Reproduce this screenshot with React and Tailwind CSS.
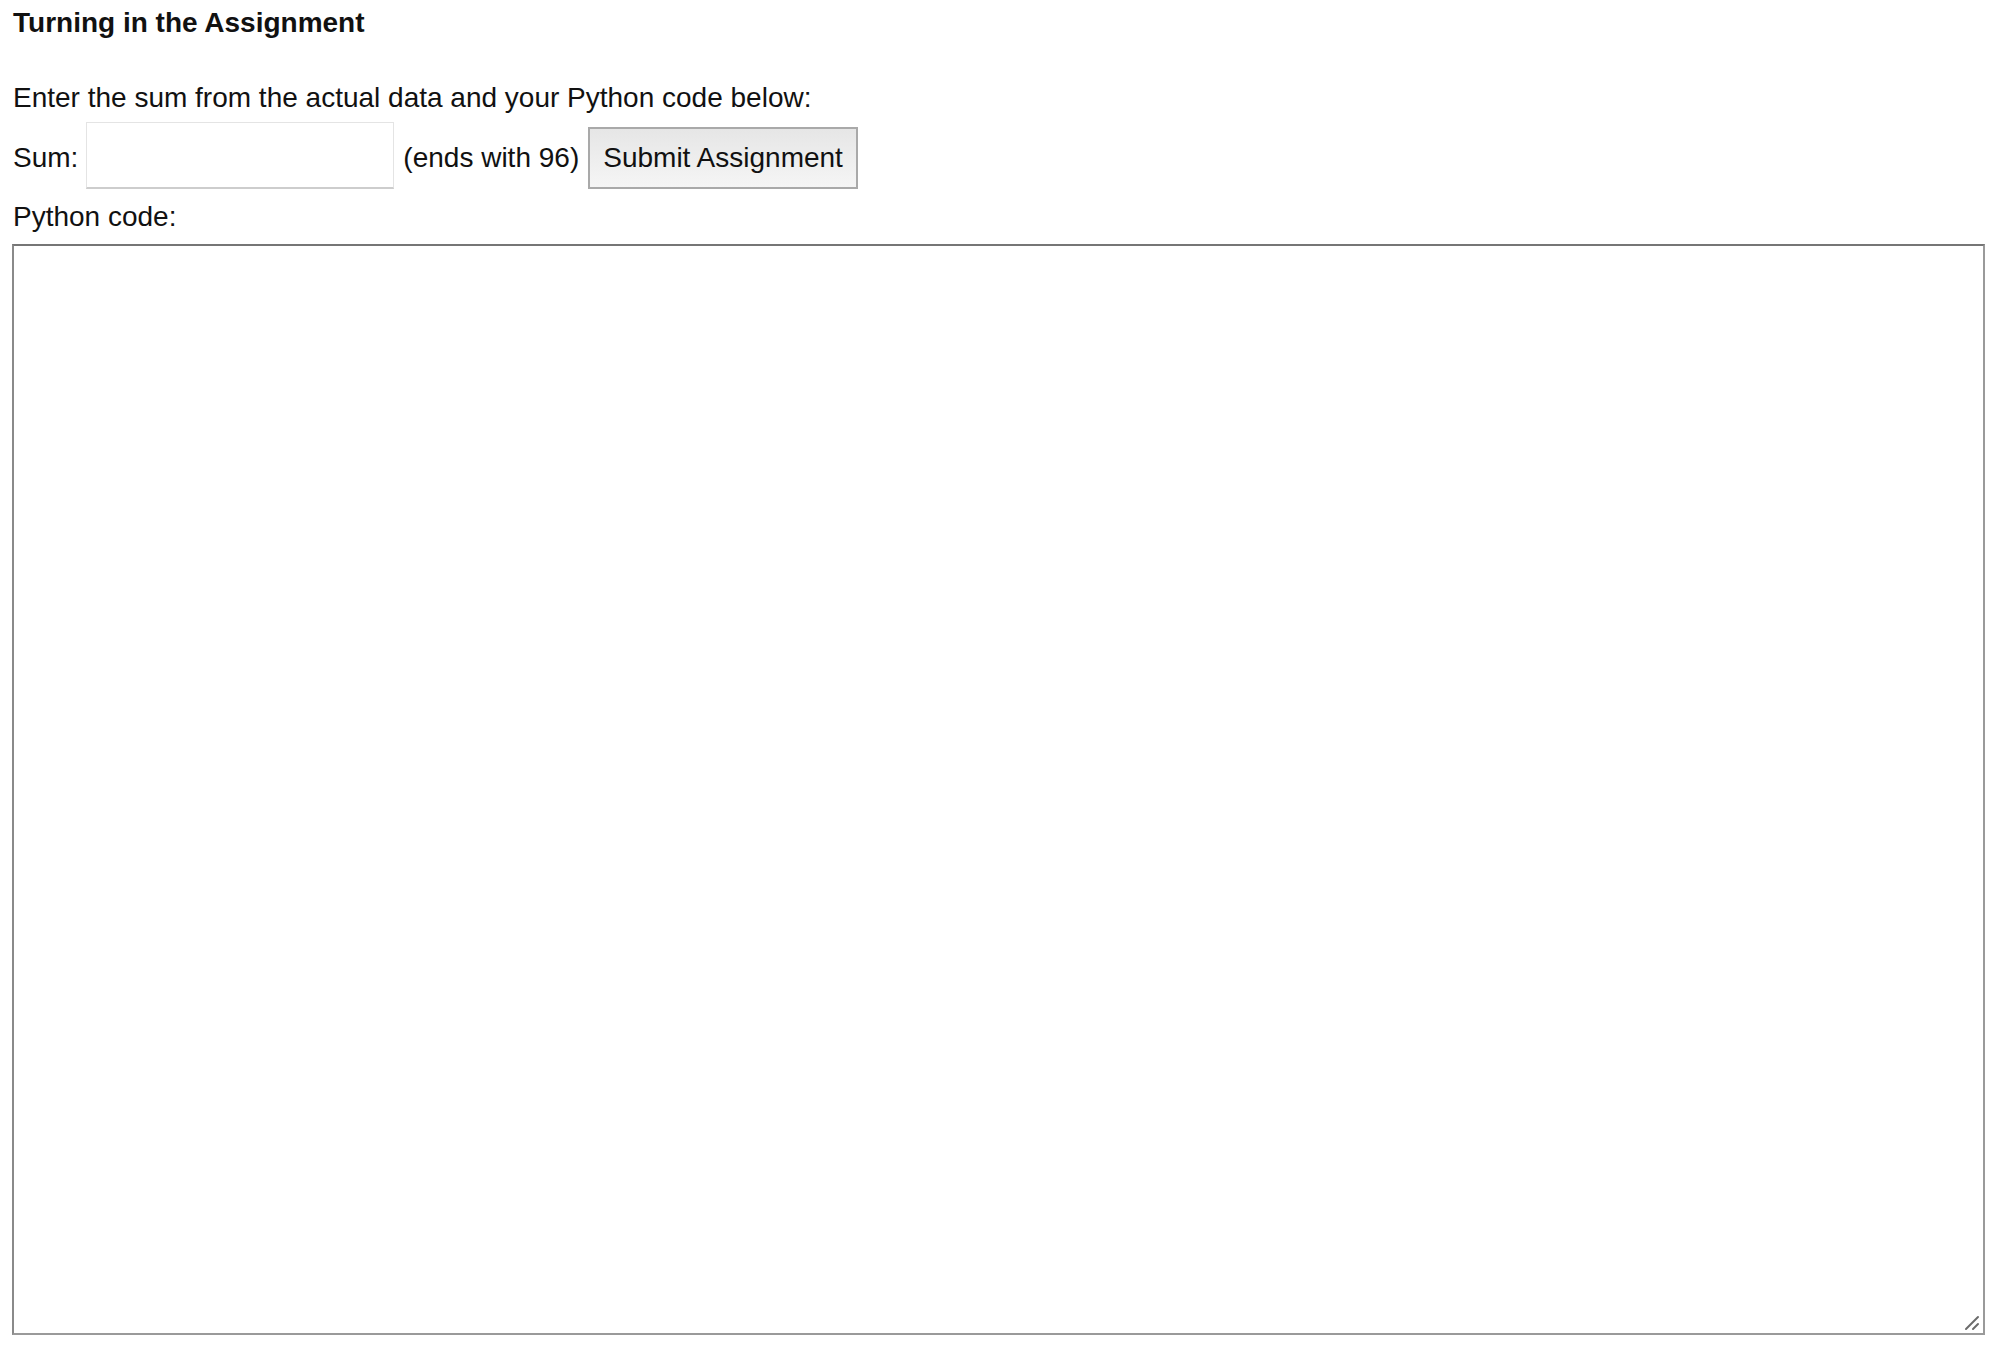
import React from "react";

export default function App() {
  return (
    <div className="bg-white text-[#111] text-[28px] leading-[32px] font-['Liberation_Sans',Arial,sans-serif] pl-[13px] pr-[27px] pt-[7px] pb-[25px]">
      <div className="font-bold">Turning in the Assignment</div>
      <div className="mt-[43px]">Enter the sum from the actual data and your Python code below:</div>
      <div className="flex items-start mt-[8px]">
        <span className="mt-[20px]">Sum:</span>
        <input
          type="text"
          className="ml-[8px] w-[308px] h-[67px] bg-white border border-[#e4e4e4] border-b-2 border-b-[#cdcdcd] outline-none px-2 text-[28px]"
        />
        <span className="ml-[9px] mt-[20px]">(ends with 96)</span>
        <button className="ml-[9px] mt-[5px] h-[62px] px-[13px] border-2 border-[#a9a9a9] bg-gradient-to-b from-[#e6e6e6] to-[#f5f5f5] text-[28px] leading-[32px] text-[#111]">
          Submit Assignment
        </button>
      </div>
      <div className="mt-[12px]">Python code:</div>
      <div className="relative mt-[11px] -ml-[1px] w-[1973px]">
        <textarea className="block w-[1973px] h-[1091px] resize-none border-2 border-[#9a9a9a] border-t-[#767676] border-l-[#8a8a8a] bg-white outline-none p-1 text-[26px]" />
        <svg
          className="absolute right-[5px] bottom-[4px] pointer-events-none"
          width="16"
          height="16"
          viewBox="0 0 16 16"
        >
          <line x1="2" y1="14" x2="14" y2="2" stroke="#6b6b6b" strokeWidth="2" strokeLinecap="round" />
          <line x1="9" y1="14" x2="14" y2="9" stroke="#6b6b6b" strokeWidth="2" strokeLinecap="round" />
        </svg>
      </div>
    </div>
  );
}
